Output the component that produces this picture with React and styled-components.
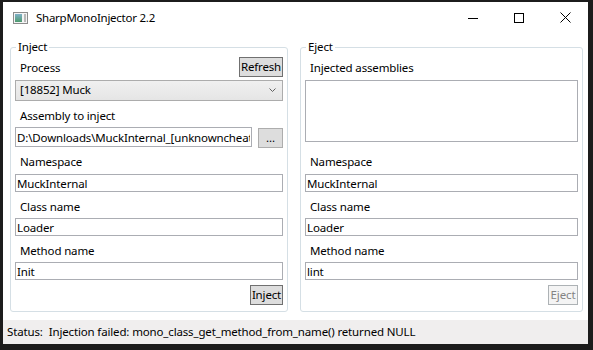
import React from 'react';
import styled, { createGlobalStyle } from 'styled-components';

const GlobalStyle = createGlobalStyle`
  html, body {
    margin: 0;
    padding: 0;
    background: #1c1c1c;
    overflow: hidden;
  }
  * {
    box-sizing: border-box;
  }
`;

const FONT = `"Noto Sans", "Open Sans", "DejaVu Sans", sans-serif`;

const Desktop = styled.div`
  width: 593px;
  height: 350px;
  padding: 2px 0 0 3px;
  background: #1c1c1c;
  font-family: ${FONT};
  font-size: 11.5px;
  letter-spacing: -0.15px;
  color: #000;
`;

const Window = styled.div`
  width: 585px;
  height: 342px;
  background: #fff;
  display: flex;
  flex-direction: column;
`;

const TitleBar = styled.div`
  height: 31px;
  display: flex;
  align-items: center;
  padding-left: 10px;
`;

const AppIcon = styled.svg`
  width: 16px;
  height: 16px;
  margin-right: 7px;
`;

const Title = styled.div`
  flex: 1;
  line-height: 16px;
  letter-spacing: -0.25px;
`;

const CaptionButton = styled.div`
  width: 46px;
  height: 31px;
  display: flex;
  align-items: center;
  justify-content: center;
`;

const Content = styled.div`
  flex: 1;
  display: flex;
  gap: 12px;
  padding: 6px 0 0 7px;
`;

const Group = styled.fieldset`
  margin: 0;
  width: ${(p) => p.$w}px;
  height: 273px;
  border: 1px solid #d5dfe5;
  border-radius: 3px;
  padding: 2px 4px 0 4px;
  display: flex;
  flex-direction: column;
`;

const Legend = styled.legend`
  padding: 0 2px;
  margin-left: 1px;
  line-height: 16px;
`;

const Label = styled.div`
  height: ${(p) => p.$h}px;
  padding: ${(p) => p.$pt}px 0 0 5px;
  line-height: 16px;
  white-space: nowrap;
`;

const Row = styled.div`
  display: flex;
  align-items: flex-start;
  justify-content: space-between;
  gap: 6px;
  height: 20px;
`;

const Button = styled.div`
  height: 20px;
  width: ${(p) => p.$w}px;
  margin-top: ${(p) => p.$mt || 0}px;
  align-self: ${(p) => p.$self || 'auto'};
  display: flex;
  align-items: center;
  justify-content: center;
  line-height: 16px;
  padding-bottom: 1px;
  background: ${(p) => (p.$disabled ? '#f4f4f4' : '#dddddd')};
  border: 1px solid ${(p) => (p.$disabled ? '#adb2b5' : p.$light ? '#adadad' : '#707070')};
  color: ${(p) => (p.$disabled ? '#838383' : '#000')};
  flex-shrink: 0;
`;

const Combo = styled.div`
  margin-top: 3px;
  height: 21px;
  border: 1px solid #acacac;
  background: linear-gradient(#f0f0f0, #e5e5e5);
  display: flex;
  align-items: center;
  justify-content: space-between;
  padding: 0 6px 1px 4px;
  line-height: 16px;
`;

const TextBox = styled.input`
  display: block;
  width: 100%;
  height: ${(p) => p.$h || 18}px;
  margin: 0;
  border: 1px solid #abadb3;
  padding: 0 1px;
  font-family: ${FONT};
  font-size: 11.5px;
  letter-spacing: -0.15px;
  color: #000;
  background: #fff;
  outline: none;
  min-width: 0;
`;

const ListBox = styled.div`
  margin-top: 3px;
  height: 62px;
  border: 1px solid #abadb3;
  background: #fff;
`;

const StatusBar = styled.div`
  height: 24px;
  background: #f0eeee;
  display: flex;
  align-items: center;
  padding: 0 0 1px 1px;
  white-space: nowrap;
`;

const StatusText = styled.span`
  padding-left: 3px;
  margin-right: ${(p) => p.$mr || 0}px;
`;

const Chevron = () => (
  <svg width="7" height="5" viewBox="0 0 7 5">
    <path d="M0.5 0.5 L3.5 3.5 L6.5 0.5" fill="none" stroke="#606060" strokeWidth="1" />
  </svg>
);

const App = () => (
  <>
    <GlobalStyle />
    <Desktop>
      <Window>
        <TitleBar>
          <AppIcon viewBox="0 0 16 16">
            <rect x="0.5" y="2.5" width="14" height="11" fill="#f4f4f4" stroke="#8c8c8c" />
            <defs>
              <linearGradient id="ig" x1="0" y1="0" x2="0" y2="1">
                <stop offset="0" stopColor="#7fb0c8" />
                <stop offset="1" stopColor="#4d9a6e" />
              </linearGradient>
            </defs>
            <rect x="2" y="4" width="7" height="8" fill="url(#ig)" />
            <rect x="11" y="4" width="2" height="8" fill="#b8b8b8" />
          </AppIcon>
          <Title>SharpMonoInjector 2.2</Title>
          <CaptionButton>
            <svg width="10" height="10" viewBox="0 0 10 10">
              <path d="M0 5.5 H10" stroke="#000" strokeWidth="1" />
            </svg>
          </CaptionButton>
          <CaptionButton>
            <svg width="10" height="10" viewBox="0 0 10 10">
              <rect x="0.5" y="0.5" width="9" height="9" fill="none" stroke="#000" strokeWidth="1" />
            </svg>
          </CaptionButton>
          <CaptionButton>
            <svg width="11" height="11" viewBox="0 0 11 11">
              <path d="M0.5 0.5 L10.5 10.5 M10.5 0.5 L0.5 10.5" stroke="#000" strokeWidth="1" />
            </svg>
          </CaptionButton>
        </TitleBar>

        <Content>
          <Group $w={278}>
            <Legend>Inject</Legend>
            <Row>
              <Label $h={20} $pt={3}>Process</Label>
              <Button $w={44}>Refresh</Button>
            </Row>
            <Combo>
              <span>[18852] Muck</span>
              <Chevron />
            </Combo>
            <Label $h={26} $pt={7}>Assembly to inject</Label>
            <Row>
              <TextBox $h={20} readOnly value="D:\Downloads\MuckInternal_[unknowncheats.me]_\MuckInternal.dll" />
              <Button $w={25} $mt={1} $light>...</Button>
            </Row>
            <Label $h={27} $pt={7}>Namespace</Label>
            <TextBox readOnly value="MuckInternal" />
            <Label $h={26} $pt={7}>Class name</Label>
            <TextBox readOnly value="Loader" />
            <Label $h={26} $pt={7}>Method name</Label>
            <TextBox readOnly value="Init" />
            <Button $w={33} $mt={5} $self="flex-end">Inject</Button>
          </Group>

          <Group $w={283}>
            <Legend>Eject</Legend>
            <Label $h={20} $pt={3}>Injected assemblies</Label>
            <ListBox />
            <Label $h={32} $pt={12}>Namespace</Label>
            <TextBox readOnly value="MuckInternal" />
            <Label $h={26} $pt={7}>Class name</Label>
            <TextBox readOnly value="Loader" />
            <Label $h={26} $pt={7}>Method name</Label>
            <TextBox readOnly value="lint" />
            <Button $w={30} $mt={5} $self="flex-end" $disabled>Eject</Button>
          </Group>
        </Content>

        <StatusBar>
          <StatusText $mr={3}>Status:</StatusText>
          <StatusText>Injection failed: mono_class_get_method_from_name() returned NULL</StatusText>
        </StatusBar>
      </Window>
    </Desktop>
  </>
);

export default App;
